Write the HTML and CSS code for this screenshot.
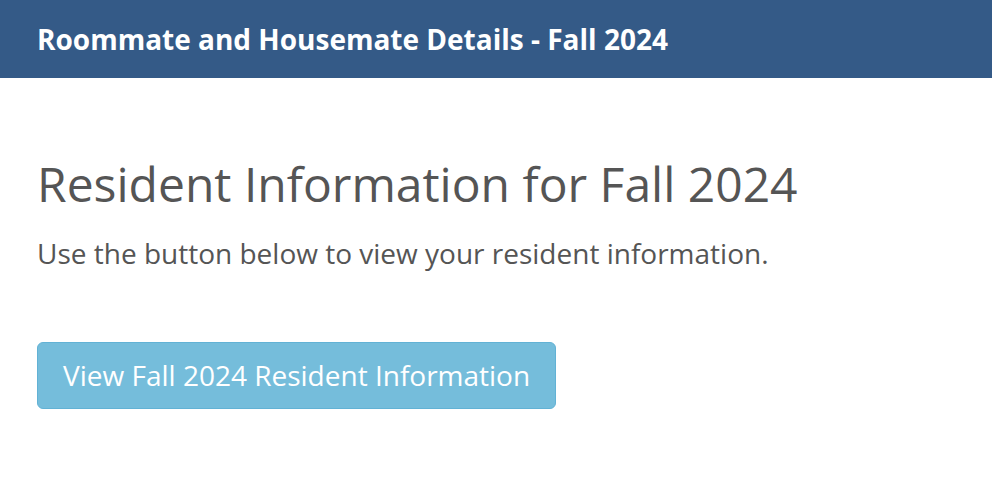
FILE: index.html
```html
<!DOCTYPE html>
<html lang="en">
<head>
  <meta charset="UTF-8">
  <meta name="viewport" content="width=device-width, initial-scale=1.0">
  <title>Roommate and Housemate Details - Fall 2024</title>
  <link rel="stylesheet" href="styles.css">
</head>
<body>
  <!-- Page title bar -->
  <div class="title-bar">
    <h1>Roommate and Housemate Details - Fall 2024</h1>
  </div>

  <div class="content">
    <h2>Resident Information for Fall 2024</h2>
    <p>Use the button below to view your resident information.</p>

    <button class="btn-info" type="button">View Fall 2024 Resident Information</button>
  </div>
</body>
</html>
```

FILE: styles.css
```css
body {
  font-family: "Open Sans", Arial, sans-serif;
  margin: 0;
  background-color: #fff;
  color: #555;
}
.title-bar {
  background-color: #345a87;
  height: 78px;
  display: flex;
  align-items: center;
  padding: 0 37px;
}
.title-bar h1 {
  margin: 0;
  color: #fff;
  font-size: 28px;
  font-weight: 700;
}
.content {
  padding: 77px 37px 0;
}
h2 {
  margin: 0;
  font-size: 48px;
  font-weight: 400;
  line-height: 1.2;
}
p {
  margin: 21px 0 0;
  font-size: 28px;
}
.btn-info {
  margin-top: 70px;
  font-family: inherit;
  font-size: 28px;
  color: #fff;
  background-color: #75bddb;
  border: 1px solid #62b2d5;
  border-radius: 6px;
  height: 67px;
  padding: 0 25px;
  cursor: pointer;
}
```
